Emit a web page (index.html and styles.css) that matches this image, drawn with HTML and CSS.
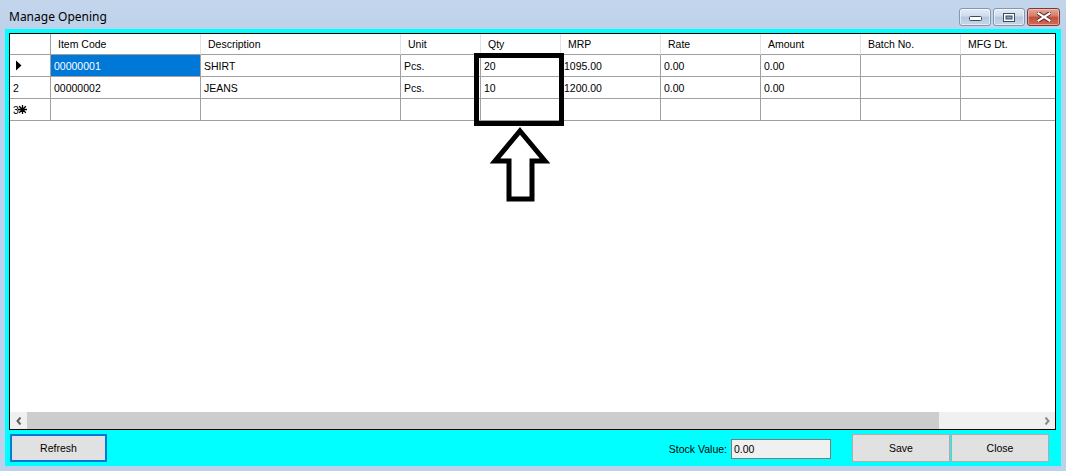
FILE: index.html
```html
<!DOCTYPE html>
<html>
<head>
<meta charset="utf-8">
<title>Manage Opening</title>
<link rel="stylesheet" href="styles.css">
</head>
<body>
<div class="window">
  <div class="titlebar">
    <span class="title">Manage Opening</span>
    <div class="controls">
      <span class="wbtn wmin"><svg width="13" height="5" viewBox="0 0 13 5"><rect x="0.5" y="0.5" width="12" height="4" rx="1" fill="#fff" stroke="#3b4b60"/></svg></span>
      <span class="wbtn wmax"><svg width="12" height="9" viewBox="0 0 12 9"><rect x="0.5" y="0.5" width="11" height="8" fill="#fff" stroke="#3b4b60"/><rect x="3" y="3" width="6" height="3" fill="#8da2bb" stroke="#3b4b60" stroke-width="1"/></svg></span>
      <span class="wbtn wclose"><svg width="14" height="10" viewBox="0 0 14 10"><path d="M1 1 L13 9 M13 1 L1 9" stroke="#5a2222" stroke-width="4" stroke-linecap="square"/><path d="M1.5 1.5 L12.5 8.5 M12.5 1.5 L1.5 8.5" stroke="#fff" stroke-width="2.2" stroke-linecap="square"/></svg></span>
    </div>
  </div>
  <div class="client">
    <div class="grid">
      <div class="cells">
        <div class="row head">
          <div class="c rh"></div>
          <div class="c">Item Code</div>
          <div class="c">Description</div>
          <div class="c">Unit</div>
          <div class="c">Qty</div>
          <div class="c">MRP</div>
          <div class="c">Rate</div>
          <div class="c">Amount</div>
          <div class="c">Batch No.</div>
          <div class="c">MFG Dt.</div>
        </div>
        <div class="row">
          <div class="c rh"><svg class="cur" width="7" height="11" viewBox="0 0 7 11"><path d="M1 0.5 L6.5 5.5 L1 10.5 Z" fill="#000"/></svg></div>
          <div class="c sel">00000001</div>
          <div class="c">SHIRT</div>
          <div class="c">Pcs.</div>
          <div class="c">20</div>
          <div class="c">1095.00</div>
          <div class="c">0.00</div>
          <div class="c">0.00</div>
          <div class="c"></div>
          <div class="c"></div>
        </div>
        <div class="row">
          <div class="c rh">2</div>
          <div class="c">00000002</div>
          <div class="c">JEANS</div>
          <div class="c">Pcs.</div>
          <div class="c">10</div>
          <div class="c">1200.00</div>
          <div class="c">0.00</div>
          <div class="c">0.00</div>
          <div class="c"></div>
          <div class="c"></div>
        </div>
        <div class="row">
          <div class="c rh"><span class="newrow">3</span><svg class="star" width="9" height="9" viewBox="0 0 9 9"><path d="M4.5 0 V9 M0 4.5 H9 M1.2 1.2 L7.8 7.8 M7.8 1.2 L1.2 7.8" stroke="#000" stroke-width="1.3"/></svg></div>
          <div class="c"></div>
          <div class="c"></div>
          <div class="c"></div>
          <div class="c"></div>
          <div class="c"></div>
          <div class="c"></div>
          <div class="c"></div>
          <div class="c"></div>
          <div class="c"></div>
        </div>
      </div>
      <div class="hscroll">
        <span class="sbtn"><svg width="6" height="8" viewBox="0 0 6 8"><path d="M4.5 0.5 L1.5 4 L4.5 7.5" fill="none" stroke="#606060" stroke-width="2"/></svg></span>
        <span class="thumb"></span>
        <span class="track"></span>
        <span class="sbtn"><svg width="6" height="8" viewBox="0 0 6 8"><path d="M1.5 0.5 L4.5 4 L1.5 7.5" fill="none" stroke="#8a8a8a" stroke-width="2"/></svg></span>
      </div>
    </div>
    <div class="bottombar">
      <button class="btn refresh">Refresh</button>
      <span class="spacer"></span>
      <label class="lbl">Stock Value:</label>
      <span class="textbox">0.00</span>
      <button class="btn save">Save</button>
      <button class="btn closebtn">Close</button>
    </div>
  </div>
  <svg class="annot" width="1066" height="471" viewBox="0 0 1066 471">
    <rect x="476.5" y="55.5" width="85" height="68" fill="none" stroke="#000" stroke-width="5"/>
    <polygon points="520,131 545,161 532,161 532,199 509,199 509,161 495,161" fill="#fff" stroke="#000" stroke-width="5" stroke-linejoin="miter"/>
  </svg>
</div>
</body>
</html>
```

FILE: styles.css
```css
* { box-sizing: border-box; }

html, body {
  margin: 0;
  padding: 0;
}

body {
  width: 1066px;
  height: 471px;
  overflow: hidden;
  background: #bfd3eb;
  font-family: "Liberation Sans", Arial, sans-serif;
  font-size: 10.5px;
  color: #000;
}

.window {
  position: relative;
  width: 1066px;
  height: 471px;
  background: linear-gradient(#c3d6ec, #bdd1ea 30px, #bdd1ea);
}

.titlebar {
  height: 29px;
  display: flex;
  align-items: flex-start;
  padding: 0 6px 0 9px;
}

.title {
  font-family: "Noto Sans", "Open Sans", sans-serif;
  font-size: 12px;
  line-height: 16px;
  padding-top: 9px;
  color: #000;
}

.controls {
  margin-left: auto;
  display: flex;
  gap: 2px;
  padding-top: 8px;
}

.wbtn {
  height: 18px;
  display: flex;
  align-items: center;
  justify-content: center;
  border: 1px solid #8797ab;
  border-radius: 3px;
  background: linear-gradient(#e3ecf7, #cddcee 45%, #b5c8e0 50%, #c6d6ea);
  box-shadow: inset 0 0 0 1px rgba(255,255,255,0.55);
}

.wmin { width: 32px; padding-top: 3px; }
.wmax { width: 32px; }
.wclose {
  width: 33px;
  border-color: #7b3a34;
  background: linear-gradient(#e6a595, #d37b68 45%, #c2503b 50%, #cf6a55);
  box-shadow: inset 0 0 0 1px rgba(255,220,210,0.5);
}

.client {
  margin-left: 5px;
  width: 1056px;
  height: 437px;
  background: #00ffff;
  padding-top: 4px;
  display: flex;
  flex-direction: column;
}

.grid {
  margin-left: 4px;
  width: 1047px;
  height: 397px;
  border: 1px solid #000;
  background: #fff;
  display: flex;
  flex-direction: column;
  overflow: hidden;
}

.cells {
  flex: 1;
  overflow: hidden;
}

.row {
  display: grid;
  grid-template-columns: 41px 150px 200px 80px 80px 100px 100px 100px 100px 100px;
  height: 22px;
}

.row.head {
  height: 21px;
}

.c {
  border-right: 1px solid #a0a0a0;
  border-bottom: 1px solid #a0a0a0;
  padding-left: 3px;
  padding-top: 1px;
  line-height: 20px;
  white-space: nowrap;
  overflow: hidden;
}

.head .c {
  border-right-color: #e3e3e3;
  padding-left: 7px;
  line-height: 19px;
}

.head .c.rh {
  border-right-color: #a0a0a0;
}

.rh {
  padding-left: 3px;
  display: flex;
  align-items: center;
}

.cur {
  margin-left: 2px;
  margin-top: -1px;
}

.newrow {
  line-height: 20px;
}

.star {
  margin-left: -1px;
  margin-top: -1px;
}

.sel {
  background: #0078d7;
  color: #fff;
}

.hscroll {
  height: 17px;
  display: flex;
  background: #f0f0f0;
}

.sbtn {
  width: 17px;
  height: 17px;
  display: flex;
  align-items: center;
  justify-content: center;
  background: #f0f0f0;
}

.thumb {
  width: 912px;
  background: #cdcdcd;
}

.track {
  flex: 1;
}

.bottombar {
  height: 36px;
  display: flex;
  align-items: flex-start;
  padding: 4px 12px 0 5px;
}

.btn {
  font-family: "Liberation Sans", Arial, sans-serif;
  font-size: 10.5px;
  color: #000;
  height: 28px;
  background: #e1e1e1;
  border: 1px solid #adadad;
  padding: 0;
  margin: 0;
}

.refresh {
  width: 97px;
  border: 2px solid #0078d7;
}

.spacer {
  flex: 1;
}

.lbl {
  margin-top: 5px;
  line-height: 20px;
  margin-right: 4px;
}

.textbox {
  margin-top: 5px;
  width: 100px;
  height: 20px;
  border: 1px solid #7a7a7a;
  background: #f0f0f0;
  line-height: 18px;
  padding-left: 2px;
  margin-right: 21px;
}

.save {
  width: 98px;
}

.closebtn {
  width: 98px;
  margin-left: 1px;
}

.annot {
  position: absolute;
  left: 0;
  top: 0;
  pointer-events: none;
}
```
